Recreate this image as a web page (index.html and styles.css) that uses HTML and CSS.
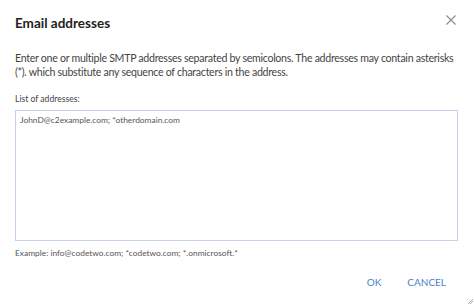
FILE: index.html
```html
<!DOCTYPE html>
<html>
<head>
<meta charset="utf-8">
<link rel="stylesheet" href="styles.css">
</head>
<body>
<div class="dialog">
  <div class="header">
    <h1 class="title">Email addresses</h1>
    <button class="close" aria-label="Close">
      <svg width="10" height="10" viewBox="0 0 10 10"><path d="M0.5 0.5L9.5 9.5M9.5 0.5L0.5 9.5" stroke="#8a8a8a" stroke-width="1.1" fill="none"/></svg>
    </button>
  </div>
  <p class="desc">Enter one or multiple SMTP addresses separated by semicolons. The addresses may contain asterisks (*). which substitute any sequence of characters in the address.</p>
  <label class="label">List of addresses:</label>
  <div class="textarea">JohnD@c2example.com; *otherdomain.com</div>
  <p class="example">Example: info@codetwo.com; *codetwo.com; *.onmicrosoft.*</p>
  <div class="footer">
    <button class="btn">OK</button>
    <button class="btn">CANCEL</button>
  </div>
  <div class="grip"></div>
</div>
</body>
</html>
```
FILE: styles.css
```css
html, body {
  margin: 0;
  padding: 0;
  background: #fff;
}
body {
  font-family: Lato, "Open Sans", sans-serif;
  color: #333;
}
.dialog {
  width: 474px;
  height: 305px;
  box-sizing: border-box;
  padding: 0 16px 0 15px;
  display: flex;
  flex-direction: column;
  position: relative;
}
.header {
  display: flex;
  justify-content: space-between;
  align-items: flex-start;
  padding-top: 14px;
}
.title {
  margin: 0;
  font-size: 13.5px;
  line-height: 18px;
  font-weight: 700;
  color: #222;
}
.close {
  border: 0;
  background: none;
  padding: 0;
  width: 12px;
  height: 12px;
  margin-top: 0;
  margin-right: 1px;
  display: flex;
  align-items: center;
  justify-content: center;
}
.desc {
  margin: 19px 0 0;
  font-size: 10.6px;
  line-height: 14px;
  letter-spacing: -0.28px;
  color: #444;
}
.label {
  margin-top: 14px;
  font-size: 8.6px;
  color: #444;
  line-height: 12px;
}
.textarea {
  margin-top: 5px;
  height: 131px;
  border: 1px solid #c4d3ea;
  box-sizing: border-box;
  padding: 3px 4px;
  font-size: 8.4px;
  color: #555;
  line-height: 12px;
}
.example {
  margin: 6px 0 0;
  font-size: 8.4px;
  color: #555;
  line-height: 12px;
}
.footer {
  display: flex;
  justify-content: flex-end;
  gap: 26px;
  margin-top: 16px;
  padding-right: 12px;
}
.btn {
  border: 0;
  background: none;
  padding: 0;
  font-family: inherit;
  font-size: 10px;
  line-height: 14px;
  color: #4d7fca;
}
.grip {
  position: absolute;
  right: 1px;
  bottom: 1px;
  width: 5px;
  height: 5px;
  background: linear-gradient(135deg, transparent 45%, #b0b0b0 45%, #b0b0b0 55%, transparent 55%, transparent 70%, #b0b0b0 70%, #b0b0b0 80%, transparent 80%);
}
```
